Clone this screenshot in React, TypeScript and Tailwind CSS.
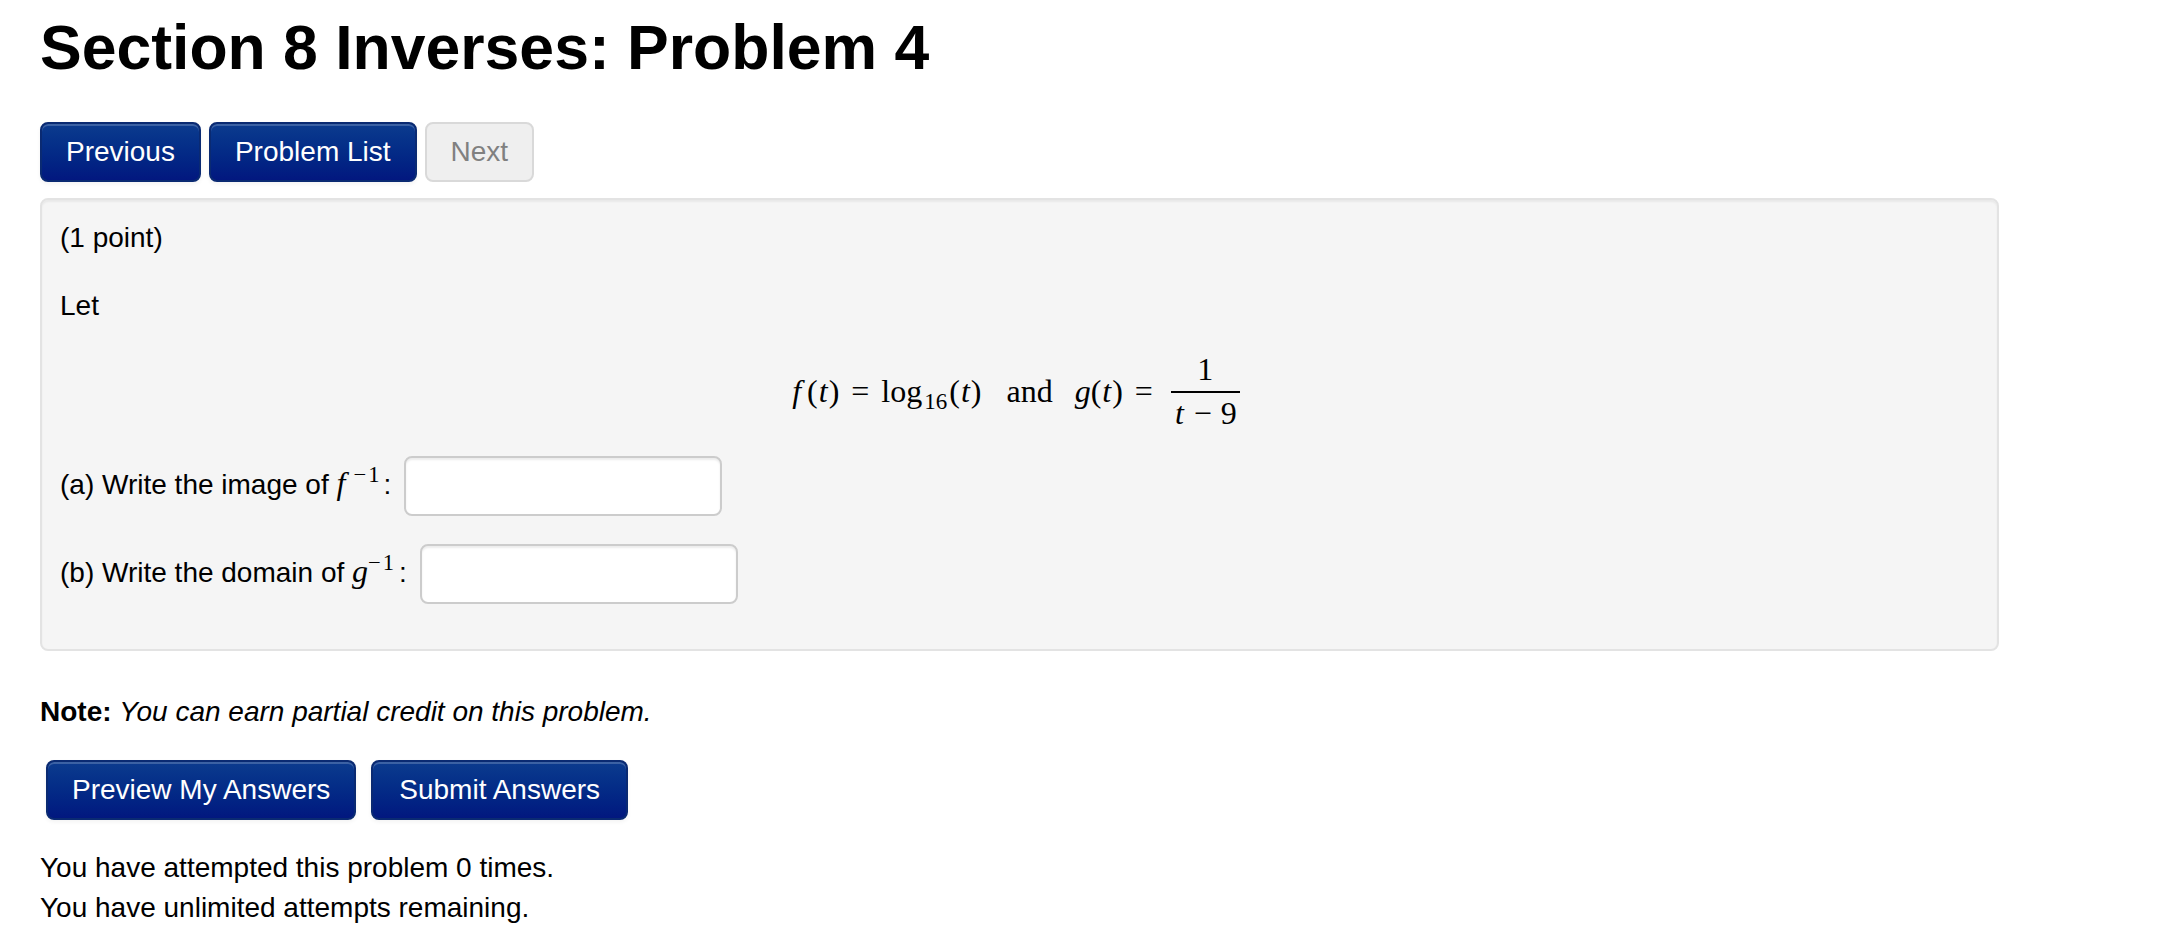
import React from "react";

const navBtn =
  "h-[60px] px-[24px] rounded-[8px] border-2 border-[#0a2a72] bg-linear-to-b from-[#0c3b8e] to-[#02177f] text-white text-[28px] leading-[40px] shadow-[inset_0_2px_0_rgba(255,255,255,0.2),0_2px_4px_rgba(0,0,0,0.05)]";

function Sup({ children }: { children: React.ReactNode }) {
  return <span className="text-[22.6px] leading-[0] align-[12px]">{children}</span>;
}

function AnswerInput({ className = "" }: { className?: string }) {
  return (
    <input
      type="text"
      className={`w-[318px] h-[60px] bg-white border-2 border-[#cccccc] rounded-[8px] shadow-[inset_0_2px_2px_rgba(0,0,0,0.075)] outline-none ${className}`}
    />
  );
}

export default function App() {
  return (
    <div className="min-h-[936px] bg-white pl-[40px] pr-[179px] font-['Liberation_Sans',Arial,sans-serif] text-[28px] leading-[40px] text-black">
      <h1 className="pt-[16px] h-[78px] text-[62.5px] leading-[62px] font-bold">Section 8 Inverses: Problem 4</h1>

      <div className="mt-[44px] flex gap-[8px]">
        <button className={navBtn}>Previous</button>
        <button className={navBtn}>Problem List</button>
        <button className="h-[60px] px-[24px] rounded-[8px] border-2 border-[#d9d9d9] bg-[#efefef] text-[#808080] text-[28px] leading-[40px]">
          Next
        </button>
      </div>

      <div className="mt-[16px] rounded-[8px] border-2 border-[#e3e3e3] bg-[#f5f5f5] px-[18px] pt-[18px] pb-[45px] shadow-[inset_0_2px_2px_rgba(0,0,0,0.05)]">
        <p className="h-[40px]">(1 point)</p>
        <p className="mt-[28px] h-[40px]">Let</p>

        {/* display math */}
        <div className="h-[130px] pr-[10px] flex items-center justify-center font-['Liberation_Serif','Times_New_Roman',serif] text-[32px] leading-[32px]">
          <span className="whitespace-nowrap">
            <i className="pl-[3px] pr-[6px]">f</i>(<i className="px-[1px]">t</i>)
            <span className="mx-[12px]">=</span>log
            <span className="text-[23px] leading-[0] align-[-7px] ml-[2px] mr-[2px]">16</span>(<i className="px-[1px]">t</i>)
            <span className="ml-[25px] mr-[22px]">and</span>
            <i>g</i>(<i className="px-[1px]">t</i>)
            <span className="ml-[12px] mr-[10px]">=</span>
          </span>
          <span className="inline-flex flex-col items-center ml-[8px]">
            <span className="h-[32px]">1</span>
            <span className="mt-[6px] h-[2px] w-full bg-black" />
            <span className="mt-[4px] h-[32px] px-[3px] whitespace-nowrap">
              <i className="px-[1px]">t</i>
              <span className="mx-[9px]">−</span>9
            </span>
          </span>
        </div>

        <div className="h-[60px] flex items-center">
          <span className="pb-[5px] whitespace-pre">
            {"(a) Write the image of "}
            <i className="font-['Liberation_Serif',serif] text-[32px]">f</i>
            <span className="font-['Liberation_Serif',serif] ml-[8px]">
              <Sup>
                <span className="mr-[2px]">−</span>1
              </Sup>
            </span>
            <span className="ml-[4px]">:</span>
          </span>
          <AnswerInput className="ml-[13px]" />
        </div>

        <div className="mt-[28px] h-[60px] flex items-center">
          <span className="pb-[5px] whitespace-pre">
            {"(b) Write the domain of "}
            <i className="font-['Liberation_Serif',serif] text-[32px]">g</i>
            <span className="font-['Liberation_Serif',serif]">
              <Sup>
                <span className="mr-[2px]">−</span>1
              </Sup>
            </span>
            <span className="ml-[5px]">:</span>
          </span>
          <AnswerInput className="ml-[13px]" />
        </div>
      </div>

      <p className="mt-[41px] h-[40px]">
        <b>Note:</b> <i>You can earn partial credit on this problem.</i>
      </p>

      <div className="mt-[28px] ml-[6px] flex gap-[15px]">
        <button className={navBtn}>Preview My Answers</button>
        <button className={`${navBtn} px-[26px]`}>Submit Answers</button>
      </div>

      <div className="mt-[28px]">
        <p>You have attempted this problem 0 times.</p>
        <p>You have unlimited attempts remaining.</p>
      </div>
    </div>
  );
}
